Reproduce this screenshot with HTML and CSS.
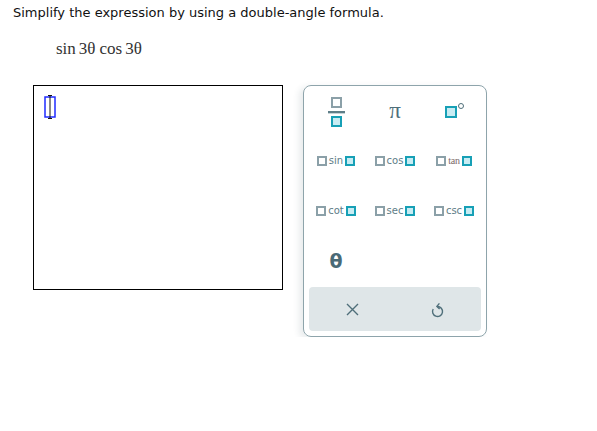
FILE: index.html
```html
<!DOCTYPE html>
<html>
<head>
<meta charset="utf-8">
<link rel="stylesheet" href="styles.css">
</head>
<body>
<p class="title">Simplify the expression by using a double-angle formula.</p>
<p class="expr">sin<span class="sp"></span>3θ<span class="sp2"></span>cos<span class="sp"></span>3θ</p>
<div class="work">
  <div class="answer">
    <svg class="cursor" width="14" height="26" viewBox="0 0 14 26">
      <rect x="2" y="3" width="10" height="20" fill="none" stroke="#1f2bff" stroke-width="1.5"/>
      <line x1="7" y1="2" x2="7" y2="24" stroke="#111" stroke-width="1"/>
      <line x1="5" y1="1.5" x2="9" y2="1.5" stroke="#111" stroke-width="1"/>
      <line x1="5" y1="24.5" x2="9" y2="24.5" stroke="#111" stroke-width="1"/>
    </svg>
  </div>
  <div class="panel">
    <div class="keys">
      <div class="key">
        <span class="frac"><span class="bx g"></span><span class="bar"></span><span class="bx t"></span></span>
      </div>
      <div class="key"><span class="pi">π</span></div>
      <div class="key"><span class="deg"><span class="bx t big"></span><span class="o"></span></span></div>

      <div class="key"><span class="fn"><span class="bx g"></span><span class="lbl">sin</span><span class="bx t"></span></span></div>
      <div class="key"><span class="fn"><span class="bx g"></span><span class="lbl">cos</span><span class="bx t"></span></span></div>
      <div class="key"><span class="fn"><span class="bx g"></span><span class="lbl tan">tan</span><span class="bx t"></span></span></div>

      <div class="key"><span class="fn"><span class="bx g"></span><span class="lbl">cot</span><span class="bx t"></span></span></div>
      <div class="key"><span class="fn"><span class="bx g"></span><span class="lbl">sec</span><span class="bx t"></span></span></div>
      <div class="key"><span class="fn"><span class="bx g"></span><span class="lbl">csc</span><span class="bx t"></span></span></div>

      <div class="key"><span class="theta">θ</span></div>
    </div>
    <div class="actions">
      <div class="act">
        <svg width="13" height="13" viewBox="0 0 13 13"><path d="M1 1 L12 12 M12 1 L1 12" stroke="#4f6f7a" stroke-width="1.4" fill="none"/></svg>
      </div>
      <div class="act">
        <svg width="14" height="17" viewBox="0 0 14 17"><path d="M6.5 5.5 A5 5 0 1 1 2.2 8" stroke="#4f6f7a" stroke-width="1.4" fill="none"/><path d="M8.4 2.4 L5.9 5.4 L8.6 7.9" stroke="#4f6f7a" stroke-width="1.4" fill="none"/></svg>
      </div>
    </div>
  </div>
</div>
</body>
</html>
```

FILE: styles.css
```css
html, body { margin: 0; padding: 0; background: #fff; }
body { font-family: "DejaVu Sans", Verdana, sans-serif; }
.title {
  margin: 5px 0 0 13px;
  font-size: 13px;
  line-height: 16px;
  color: #111;
}
.expr {
  margin: 18px 0 0 56px;
  font-family: "Liberation Serif", "Times New Roman", serif;
  font-size: 17px;
  line-height: 20px;
  color: #333;
}
.sp { display: inline-block; width: 3px; }
.sp2 { display: inline-block; width: 4px; }
.work {
  display: flex;
  align-items: flex-start;
  gap: 20px;
  margin: 26px 0 0 33px;
}
.answer {
  box-sizing: border-box;
  width: 250px;
  height: 205px;
  border: 1px solid #000;
  padding: 8px 0 0 9px;
}
.cursor { display: block; }
.panel {
  width: 184px;
  height: 252px;
  box-sizing: border-box;
  border: 1px solid #8ea4ab;
  border-radius: 8px;
  box-shadow: -4px 2px 6px rgba(40, 70, 80, 0.10);
  padding: 0 5px 5px;
  display: flex;
  flex-direction: column;
}
.keys {
  display: grid;
  grid-template-columns: repeat(3, 59px);
  grid-template-rows: repeat(4, 50px);
  justify-content: center;
  margin-bottom: 1px;
}
.key {
  display: flex;
  align-items: center;
  justify-content: center;
}
.bx {
  display: inline-block;
  width: 10px;
  height: 10px;
  box-sizing: border-box;
}
.bx.g { border: 2px solid #8ba0a8; background: #fff; }
.bx.t { border: 2px solid #17a0b6; background: #c8ecf3; }
.frac {
  display: flex;
  flex-direction: column;
  align-items: center;
  margin-top: 1px;
}
.frac .bx { width: 11px; height: 11px; }
.frac .bar {
  width: 17px;
  height: 2px;
  background: #5f7e88;
  margin: 3px 0 2px;
  border-bottom: 1px solid #c5d3d7;
}
.pi {
  font-family: "Liberation Serif", serif;
  font-size: 23px;
  color: #4f6f7a;
  line-height: 1;
  margin-top: -2px;
}
.deg { display: flex; align-items: flex-start; }
.deg .big { width: 12px; height: 12px; margin-top: 1px; }
.deg .o {
  width: 4px; height: 4px;
  border: 1px solid #4f6f7a;
  border-radius: 50%;
  margin: -2px 0 0 1px;
}
.fn { display: flex; align-items: center; }
.lbl {
  font-family: "DejaVu Sans", Verdana, sans-serif;
  font-size: 10px;
  color: #5d7c87;
  margin: 0 2px;
  line-height: 1;
}
.lbl.tan {
  font-family: "Liberation Serif", serif;
  font-size: 10px;
  color: #7a6868;
  letter-spacing: -0.3px;
}
.theta {
  font-family: "DejaVu Sans", sans-serif;
  font-weight: bold;
  font-size: 19px;
  color: #4a6a76;
  line-height: 1;
}
.actions {
  flex: 1;
  display: flex;
  background: #dfe6e8;
  border-radius: 4px;
}
.act {
  flex: 1;
  display: flex;
  align-items: center;
  justify-content: center;
}
.act svg { display: block; }
```
